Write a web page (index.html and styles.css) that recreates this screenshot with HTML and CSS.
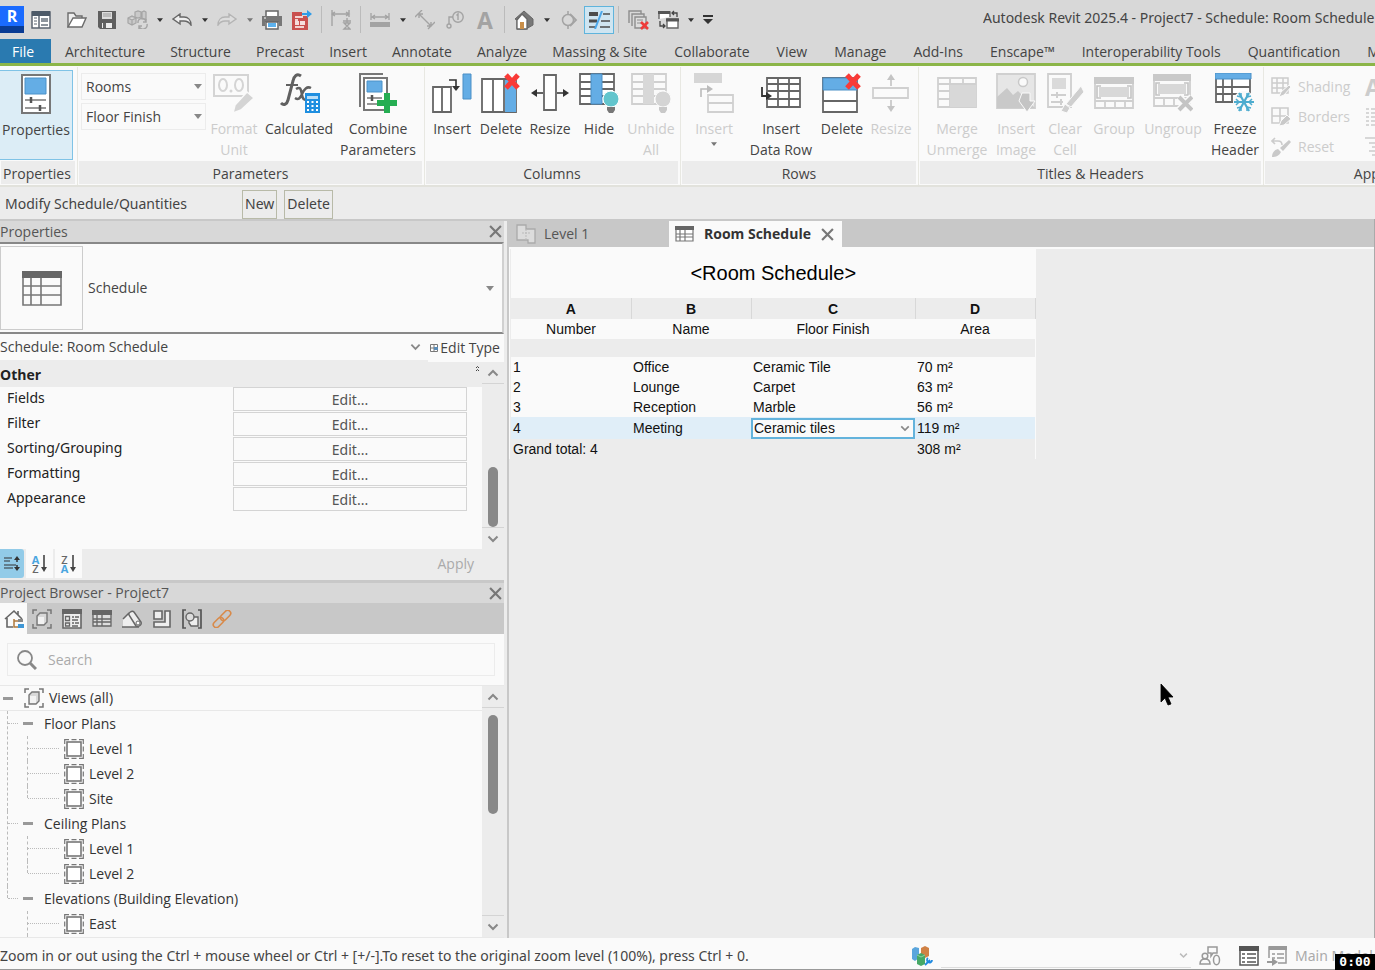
FILE: index.html
```html
<!DOCTYPE html>
<html lang="en">
<head>
    <meta charset="UTF-8">
    <meta name="viewport" content="width=device-width, initial-scale=1.0">
    <title>Autodesk Revit 2025.4 - Project7</title>
    <link rel="stylesheet" href="styles.css">
</head>
<body>
    <!-- shared icons -->
    <svg class="sprite" aria-hidden="true">
        <symbol id="caret" viewBox="0 0 8 5"><path d="M0 0h8L4 5z" fill="currentColor"/></symbol>
        <symbol id="chevron" viewBox="0 0 12 8"><path d="M1.500 1.500L6 6l4.500-4.500" fill="none" stroke="currentColor" stroke-width="2"/></symbol>
        <symbol id="close" viewBox="0 0 12 12"><path d="M1 1l10 10M11 1L1 11" stroke="currentColor" stroke-width="2"/></symbol>
        <symbol id="redx" viewBox="0 0 18 18"><path d="M3 2l12 13M15 2L3 15" stroke="#f93a37" stroke-width="5"/></symbol>
        <symbol id="cube" viewBox="0 0 20 20"><path d="M1 5V1h4M15 1h4v4M1 15v4h4M15 19h4v-4" fill="none" stroke="#777" stroke-width="1.500"/><path d="M5 7l3-3h7v9l-3 3H5z" fill="#d8d8d8" stroke="#777" stroke-width="1.400"/><path d="M6 8h6v7H6z" fill="#f2f2f2"/></symbol>
        <symbol id="plan" viewBox="0 0 20 20"><path d="M.7 5V.7H5M7.500.7H12.500M15 .7h4.300V5M19.300 7.500v5M19.300 15v4.300H15M12.500 19.300h-5M5 19.300H.7V15M.7 12.500v-5" fill="none" stroke="#777" stroke-width="1.200"/><rect x="3" y="3" width="14" height="14" fill="#fff" stroke="#777" stroke-width="1.600"/></symbol>
        <symbol id="grid" viewBox="0 0 40 35"><path d="M1 1h38v33H1zM1 15h38M1 24h38M9 5v29M19 5v29" fill="none" stroke="#777" stroke-width="1.600"/><path d="M0 0h40v7H0z" fill="#666"/></symbol>
    </svg>

    <header class="titlebar">
        <button class="logo" aria-label="Revit">R</button>
        <button class="qa" aria-label="Home view"><svg width="20" height="20" viewBox="0 0 20 20"><path d="M1 2h18v16H1z" fill="#fff" stroke="#5b6470" stroke-width="1.500"/><path d="M1 1h18v5H1z" fill="#4d5a68"/><path d="M3 8h3M3 11h3M3 14h3" stroke="#5b6470"/><path d="M8 6v12" stroke="#5b6470" stroke-width="1.500"/><path d="M10 8h7v4h-7zM10 14h7v2h-7z" fill="#8d959d"/></svg></button>
        <span class="qa-space"></span>
        <button class="qa" aria-label="Open"><svg width="20" height="18" viewBox="0 0 20 18"><path d="M1 16V2h6l2 3h6v3" fill="#eee" stroke="#6b6b6b" stroke-width="1.400"/><path d="M1 16L6 7h13l-4 9z" fill="#fff" stroke="#6b6b6b" stroke-width="1.400"/></svg></button>
        <button class="qa" aria-label="Save"><svg width="18" height="18" viewBox="0 0 18 18"><path d="M0 0h18v18H2l-2-2z" fill="#5f5f5f"/><path d="M4 1h10v7H4z" fill="#ddd"/><path d="M5 3h8M5 5h8" stroke="#999"/><path d="M4 12h10v5H4z" fill="#eee"/><path d="M5 12h3v5H5z" fill="#666"/></svg></button>
        <button class="qa" aria-label="Synchronize"><svg width="21" height="19" viewBox="0 0 21 19"><g fill="#c9c9c9" stroke="#a5a5a5" stroke-width="1.200"><path d="M8 2l3-1 3 1v5l-3 1-3-1zM15 2l2-1 2 1v7h-4zM1 8l4-2 4 2v5l-4 2-4-2zM1 8l4 2 4-2M5 10v5"/></g><path d="M11 13a4 4 0 0 1 8-1M20 14a4 4 0 0 1-8 2M19 9v3h-3M12 19v-3h3" fill="none" stroke="#a5a5a5" stroke-width="1.500"/></svg></button>
        <button class="drop" aria-label="Synchronize options"><svg width="6" height="4"><use href="#caret"/></svg></button>
        <button class="qa" aria-label="Undo"><svg width="20" height="13" viewBox="0 0 20 13"><path d="M1 6l7-5v3h4c4 0 7 3 7 8-2-3-4-4-7-4H8v3z" fill="#eee" stroke="#666" stroke-width="1.400"/></svg></button>
        <button class="drop" aria-label="Undo list"><svg width="6" height="4"><use href="#caret"/></svg></button>
        <button class="qa" aria-label="Redo"><svg width="20" height="13" viewBox="0 0 20 13"><path d="M19 6l-7-5v3H8c-4 0-7 3-7 8 2-3 4-4 7-4h4v3z" fill="#ddd" stroke="#b4b4b4" stroke-width="1.400"/></svg></button>
        <button class="drop dim" aria-label="Redo list"><svg width="6" height="4"><use href="#caret"/></svg></button>
        <button class="qa" aria-label="Print"><svg width="20" height="20" viewBox="0 0 20 20"><path d="M4 7V1h12v6" fill="#fff" stroke="#666" stroke-width="1.500"/><path d="M0 6h20v10h-3v-4H3v4H0z" fill="#777"/><path d="M2 8h2" stroke="#fff"/><path d="M4 12h12v7H4z" fill="#fff" stroke="#666" stroke-width="1.500"/><path d="M6 13h8v4H6z" fill="#5db2ee"/></svg></button>
        <button class="qa" aria-label="Export to PDF"><svg width="20" height="20" viewBox="0 0 20 20"><path d="M0 2h10v4h6v14H0z" fill="#c9504f"/><path d="M3 7h8M3 10h3M3 17h9" stroke="#fff" stroke-width="1.300"/><path d="M3 11h4v4H3zM8 11h5v4H8z" fill="#f6dede"/><path d="M10 3h5V0l5 4-5 4V5h-5z" fill="#2f9be8"/></svg></button>
        <span class="qa-sep"></span>
        <button class="qa" aria-label="Align"><svg width="20" height="20" viewBox="0 0 20 20"><path d="M1 0v16M1 4h17M18 0v7M4 2L1 4l3 2M15 2l3 2-3 2M12 11h8M16 8v5M13 13h6l-3 3zM13 19h6l-3-3z" fill="none" stroke="#a3a3a3" stroke-width="1.400"/></svg></button>
        <span class="qa-sep"></span>
        <button class="qa" aria-label="Measure"><svg width="20" height="14" viewBox="0 0 20 14"><path d="M1 0v7M19 0v7M2 4h16M5 2L2 4l3 2M15 2l3 2-3 2" fill="none" stroke="#a3a3a3" stroke-width="1.300"/><path d="M0 9h20v5H0z" fill="#a3a3a3"/></svg></button>
        <button class="drop" aria-label="Measure options"><svg width="6" height="4"><use href="#caret"/></svg></button>
        <button class="qa" aria-label="Aligned dimension"><svg width="20" height="20" viewBox="0 0 20 20"><path d="M0 7l7-7M13 19l7-7M4 4l12 12M4 8V4h4M16 12v4h-4" fill="none" stroke="#a3a3a3" stroke-width="1.400"/></svg></button>
        <button class="qa" aria-label="Tag"><svg width="18" height="18" viewBox="0 0 18 18"><circle cx="12" cy="6" r="5.200" fill="none" stroke="#a3a3a3" stroke-width="1.400"/><path d="M10.500 4.500L12 3v6M7 6H3v7" fill="none" stroke="#a3a3a3" stroke-width="1.400"/><circle cx="3" cy="15" r="2" fill="none" stroke="#a3a3a3" stroke-width="1.400"/></svg></button>
        <button class="qa letter" aria-label="Text">A</button>
        <span class="qa-sep"></span>
        <button class="qa" aria-label="Default 3D view"><svg width="20" height="20" viewBox="0 0 20 20"><path d="M1 9l9-8 9 8v6l-7 4H3v-9z" fill="#777" stroke="#666"/><path d="M3 10l5-6 5 5v10H3z" fill="#fff" stroke="#666" stroke-width="1.300"/><path d="M6 12h4v7H6z" fill="#c98f4a"/></svg></button>
        <button class="drop" aria-label="3D view options"><svg width="6" height="4"><use href="#caret"/></svg></button>
        <button class="qa" aria-label="Section"><svg width="18" height="18" viewBox="0 0 18 18"><circle cx="8" cy="9" r="5.500" fill="none" stroke="#a3a3a3" stroke-width="1.500"/><path d="M8 0v3M8 15v3" stroke="#a3a3a3" stroke-width="1.500"/><path d="M10 3l6 6-6 6" fill="none" stroke="#a3a3a3" stroke-width="1.800"/></svg></button>
        <button class="qa on" aria-label="Thin lines"><svg width="21" height="18" viewBox="0 0 21 18"><path d="M0 3h9" stroke="#4c4c4c" stroke-width="4"/><path d="M0 10h8" stroke="#4c4c4c" stroke-width="3"/><path d="M0 16h7M14 3h7M12 10h9M11 16h10" stroke="#4c4c4c" stroke-width="1.500"/><path d="M13 0L6 18" stroke="#4da8ea" stroke-width="2"/></svg></button>
        <span class="qa-sep"></span>
        <button class="qa" aria-label="Close inactive views"><svg width="21" height="20" viewBox="0 0 21 20"><path d="M1 13V1h12v3M4 16V4h12v3" fill="none" stroke="#8d8d8d" stroke-width="1.400"/><path d="M7 7h11v11H7z" fill="#ddd" stroke="#8d8d8d" stroke-width="1.400"/><path d="M9 10h6M9 13h4" stroke="#8d8d8d"/><path d="M13 12l7 7M20 12l-7 7" stroke="#ee3c3a" stroke-width="2.600"/></svg></button>
        <button class="qa" aria-label="Switch windows"><svg width="21" height="19" viewBox="0 0 21 19"><path d="M1 9V2h11v5" fill="#fff" stroke="#666" stroke-width="1.400"/><path d="M0 1h12v3H0z" fill="#555"/><path d="M9 9h11v9H9z" fill="#fff" stroke="#666" stroke-width="1.400"/><path d="M8 10h13" stroke="#555" stroke-width="3"/><path d="M14 3h5v4M16 1l-2 2 2 2M2 11v5h5M5 14l2 2-2 2" fill="none" stroke="#444" stroke-width="1.300"/></svg></button>
        <button class="drop" aria-label="Window list"><svg width="6" height="4"><use href="#caret"/></svg></button>
        <button class="custom" aria-label="Customize toolbar"><svg width="10" height="9" viewBox="0 0 10 9"><path d="M0 0h10v2H0zM0 4h10L5 9z" fill="#333"/></svg></button>
        <h1 class="app-title">Autodesk Revit 2025.4 - Project7 - Schedule: Room Schedule</h1>
    </header>

    <nav class="tabs">
        <a class="file" href="#">File</a>
        <a href="#">Architecture</a>
        <a href="#">Structure</a>
        <a href="#">Precast</a>
        <a href="#">Insert</a>
        <a href="#">Annotate</a>
        <a href="#">Analyze</a>
        <a href="#">Massing &amp; Site</a>
        <a href="#">Collaborate</a>
        <a href="#">View</a>
        <a href="#">Manage</a>
        <a href="#">Add-Ins</a>
        <a href="#">Enscape™</a>
        <a href="#">Interoperability Tools</a>
        <a href="#">Quantification</a>
        <a href="#">Modify</a>
    </nav>

    <section class="ribbon">
        <div class="panel p-properties">
            <div class="tools">
                <button class="tool active"><svg width="30" height="40" viewBox="0 0 30 40"><path d="M1 1h28v38H1z" fill="#fff" stroke="#777" stroke-width="2"/><path d="M4 4h21v16H4z" fill="#64ade5" stroke="#4b91c8"/><path d="M4 26h21M4 34h21" stroke="#777" stroke-width="1.500"/><path d="M10 23v6M19 31v6" stroke="#555" stroke-width="2.500"/></svg><span>Properties</span></button>
            </div>
            <h2>Properties</h2>
        </div>
        <div class="panel p-parameters">
            <div class="tools">
                <div class="selects">
                    <label class="combo"><select aria-label="Category"><option>Rooms</option></select><svg width="10" height="5"><use href="#caret"/></svg></label>
                    <label class="combo"><select aria-label="Parameter"><option>Floor Finish</option></select><svg width="10" height="5"><use href="#caret"/></svg></label>
                </div>
                <button class="tool w-56" disabled><svg width="42" height="40" viewBox="0 0 42 40"><rect x="1" y="2" width="34" height="21" fill="none" stroke="#d4d4d4" stroke-width="2"/><g fill="none" stroke="#d4d4d4" stroke-width="2"><ellipse cx="10" cy="12" rx="4" ry="6"/><ellipse cx="26" cy="12" rx="4" ry="6"/></g><circle cx="18" cy="18" r="1.500" fill="#d4d4d4"/><path d="M20 40l2-8 12-13 7 6-13 12z" fill="#d4d4d4" stroke="#fafafa" stroke-width="1.500"/></svg><span>Format</span><span>Unit</span></button>
                <button class="tool w-74"><svg width="42" height="40" viewBox="0 0 42 40"><g fill="none" stroke="#606060"><path d="M23 3c-4-3-7 0-8 5L10 27c-1 4-4 6-7 3" stroke-width="3"/><path d="M8 12h12" stroke-width="2"/><path d="M18 16c5-3 5 1 6 6s3 6 6 3M33 15c-4-2-7 1-9 6s-4 6-7 4" stroke-width="2.500"/></g><path d="M27 20h15v20H27z" fill="#1f8fe0"/><path d="M29 23h11v3H29z" fill="#b9def8"/><path d="M29 29h11M29 33h11M29 37h11" stroke="#fff" stroke-width="2" stroke-dasharray="2 2.500"/></svg><span>Calculated</span></button>
                <button class="tool w-84"><svg width="38" height="40" viewBox="0 0 38 40"><path d="M1 34V1h23" fill="none" stroke="#777" stroke-width="2"/><path d="M5 5h23v32H5z" fill="#fff" stroke="#777" stroke-width="2"/><path d="M8 8h15v11H8z" fill="#64ade5" stroke="#4b91c8"/><path d="M8 25h15M8 31h10" stroke="#777" stroke-width="1.500"/><path d="M13 22v6" stroke="#555" stroke-width="2.500"/><path d="M25 20h6v7h7v6h-7v7h-6v-7h-7v-6h7z" fill="#25ad52"/></svg><span>Combine</span><span>Parameters</span></button>
            </div>
            <h2>Parameters</h2>
        </div>
        <div class="panel p-columns">
            <div class="tools">
                <button class="tool w-48"><svg width="40" height="40" viewBox="0 0 40 40"><path d="M1 14h18v25H1zM10 14v25" fill="#fff" stroke="#666" stroke-width="1.800"/><path d="M17 7h7v8" fill="none" stroke="#333" stroke-width="1.600"/><path d="M20 13h8l-4 5z" fill="#333"/><path d="M31 1h8v25h-8z" fill="#64ade5" stroke="#4b8fc6"/></svg><span>Insert</span></button>
                <button class="tool w-50"><svg width="40" height="40" viewBox="0 0 40 40"><path d="M1 6h34v33H1zM12 6v33M23 6v33" fill="#fff" stroke="#666" stroke-width="1.800"/><path d="M24 7h11v32H24z" fill="#64ade5"/><use href="#redx" x="22" width="18" height="18"/></svg><span>Delete</span></button>
                <button class="tool w-48"><svg width="38" height="40" viewBox="0 0 38 40"><path d="M13 2h12v35H13z" fill="#fff" stroke="#666" stroke-width="1.800"/><path d="M4 20h8M26 20h8" stroke="#333" stroke-width="1.600"/><path d="M0 20l6-4v8zM38 20l-6-4v8z" fill="#333"/></svg><span>Resize</span></button>
                <button class="tool w-50"><svg width="40" height="40" viewBox="0 0 40 40"><path d="M1 1h34v30H1zM1 9h34M1 16h34M1 23h34" fill="#fff" stroke="#666" stroke-width="1.800"/><path d="M12 1h11v30H12z" fill="#64ade5" stroke="#4b8fc6"/><circle cx="32" cy="26" r="8" fill="#62c5cd" stroke="#fff"/><path d="M28 34h8v3l-2 3h-4l-2-3z" fill="#777"/></svg><span>Hide</span></button>
                <button class="tool w-54" disabled><svg width="40" height="40" viewBox="0 0 40 40"><path d="M1 1h34v30H1zM1 9h34M1 16h34M1 23h34" fill="#fafafa" stroke="#d0d0d0" stroke-width="1.800"/><path d="M12 1h11v30H12z" fill="#d8d8d8"/><circle cx="32" cy="26" r="8" fill="#d4d4d4" stroke="#fafafa"/><path d="M28 34h8v3l-2 3h-4l-2-3z" fill="#c8c8c8"/></svg><span>Unhide</span><span>All</span></button>
            </div>
            <h2>Columns</h2>
        </div>
        <div class="panel p-rows">
            <div class="tools">
                <button class="tool w-60" disabled><svg width="40" height="40" viewBox="0 0 40 40"><path d="M0 0h28v10H0z" fill="#d6d6d6"/><path d="M7 24v-8h8" fill="none" stroke="#bbb" stroke-width="1.600"/><path d="M13 12l6 4-6 4z" fill="#bbb"/><path d="M14 22h25v17H14zM14 30h25" fill="none" stroke="#d0d0d0" stroke-width="1.800"/></svg><span>Insert</span><svg class="more" width="6" height="4"><use href="#caret"/></svg></button>
                <button class="tool w-74"><svg width="40" height="40" viewBox="0 0 40 40"><path d="M6 5h33v29H6zM6 11h33M6 18h33M6 26h33M17 5v29M28 5v29" fill="#fff" stroke="#666" stroke-width="1.800"/><path d="M1 14v9h5" fill="none" stroke="#333" stroke-width="1.800"/><path d="M5 19l6 4-6 4z" fill="#333"/></svg><span>Insert</span><span>Data Row</span></button>
                <button class="tool w-48"><svg width="40" height="40" viewBox="0 0 40 40"><path d="M1 5h34v34H1zM1 28h34" fill="#fff" stroke="#666" stroke-width="1.800"/><path d="M1 5h34v12H1z" fill="#64ade5" stroke="#4b8fc6"/><use href="#redx" x="22" width="18" height="18"/></svg><span>Delete</span></button>
                <button class="tool w-50" disabled><svg width="38" height="40" viewBox="0 0 38 40"><path d="M1 15h35v10H1z" fill="none" stroke="#d0d0d0" stroke-width="1.800"/><path d="M19 5v8M19 27v8" stroke="#c4c4c4" stroke-width="1.600"/><path d="M19 1l4 6h-8zM19 39l4-6h-8z" fill="#c4c4c4"/></svg><span>Resize</span></button>
            </div>
            <h2>Rows</h2>
        </div>
        <div class="panel p-titles">
            <div class="tools">
                <button class="tool w-70" disabled><svg width="40" height="40" viewBox="0 0 40 40"><path d="M1 5h38v29H1zM1 11h38M1 18h12M1 26h12M13 5v29M26 5v6" fill="none" stroke="#d0d0d0" stroke-width="1.800"/><path d="M13 12h26v22H13z" fill="#d8d8d8"/></svg><span>Merge</span><span>Unmerge</span></button>
                <button class="tool w-48" disabled><svg width="40" height="40" viewBox="0 0 40 40"><path d="M1 1h38v34H1z" fill="#e6e6e6" stroke="#d0d0d0" stroke-width="1.800"/><path d="M1 35V24l10-9 6 7 5-4 17 17z" fill="#c9c9c9"/><circle cx="27" cy="9" r="4.500" fill="#fafafa" stroke="#c9c9c9" stroke-width="1.500"/><path d="M26 20h8v8h5l-8 11-8-11z" fill="#c4c4c4" stroke="#fafafa"/></svg><span>Insert</span><span>Image</span></button>
                <button class="tool w-50" disabled><svg width="38" height="40" viewBox="0 0 38 40"><path d="M2 1h23v33H2z" fill="none" stroke="#cfcfcf" stroke-width="1.800"/><path d="M6 5h14v11H6z" fill="#dadada"/><path d="M5 22h15M5 29h12M11 19v6M15 26v6" stroke="#cfcfcf" stroke-width="2"/><path d="M20 31L35 13l3 6-13 15zM15 38l4-7 5 4-3 5z" fill="#cfcfcf" stroke="#fafafa"/></svg><span>Clear</span><span>Cell</span></button>
                <button class="tool w-48" disabled><svg width="40" height="40" viewBox="0 0 40 40"><path d="M1 5h38v30H1zM1 28h38M11 28v7M21 28v7M31 28v7" fill="none" stroke="#cfcfcf" stroke-width="1.800"/><path d="M0 4h40v7H0z" fill="#c9c9c9"/><path d="M5 14h30v10H5z" fill="#d8d8d8"/><path d="M7 13H3v12h4M33 13h4v12h-4" fill="none" stroke="#c4c4c4" stroke-width="1.600"/></svg><span>Group</span></button>
                <button class="tool w-70" disabled><svg width="40" height="40" viewBox="0 0 40 40"><path d="M1 2h36v31H1zM1 25h36M11 25v8M21 25v8" fill="none" stroke="#cfcfcf" stroke-width="1.800"/><path d="M0 1h38v7H0z" fill="#c9c9c9"/><path d="M5 11h28v10H5z" fill="#d8d8d8"/><path d="M7 10H3v12h4M31 10h4v12h-4" fill="none" stroke="#c4c4c4" stroke-width="1.600"/><path d="M26 24l13 13M39 24L26 37" stroke="#fafafa" stroke-width="7"/><path d="M26 24l13 13M39 24L26 37" stroke="#c4c4c4" stroke-width="4"/></svg><span>Ungroup</span></button>
                <button class="tool w-54"><svg width="40" height="40" viewBox="0 0 40 40"><path d="M1 1h34v28H1zM1 14h34M1 21h34M8 6v23M17 6v23" fill="#fff" stroke="#666" stroke-width="1.800"/><path d="M0 0h36v6H0z" fill="#64ade5" stroke="#4b8fc6"/><circle cx="29" cy="29" r="11" fill="#fafafa"/><g stroke="#4eaccf" stroke-width="2.200" fill="none"><path d="M19 29h20M24 20l10 18M34 20L24 38"/><path d="M21 26l3 3-3 3M37 26l-3 3 3 3M22 23l4 1v-4M32 20v4l4-1M22 35l4-1v4M32 38v-4l4 1" stroke-width="1.500"/></g></svg><span>Freeze</span><span>Header</span></button>
            </div>
            <h2>Titles &amp; Headers</h2>
        </div>
        <div class="panel p-appearance">
            <div class="tools">
                <div class="small-tools">
                    <button disabled><svg width="20" height="20" viewBox="0 0 20 20"><path d="M1 1h16v15H1zM1 6h16M1 11h16M6 1v15M12 1v15" fill="none" stroke="#ccc" stroke-width="1.500"/><path d="M8 20l2-5 8-7 2 2-7 8z" fill="#c9c9c9" stroke="#fafafa"/></svg>Shading</button>
                    <button disabled><svg width="20" height="20" viewBox="0 0 20 20"><path d="M1 1h16v15H1zM1 9h16M9 1v15" fill="none" stroke="#ccc" stroke-width="1.600"/><path d="M8 19l2-5 6-6 4 4-7 6z" fill="#c9c9c9" stroke="#fafafa"/></svg>Borders</button>
                    <button disabled><svg width="20" height="20" viewBox="0 0 20 20"><path d="M1 4h6c3 0 4 2 4 4M4 1L1 4l3 3" fill="none" stroke="#ccc" stroke-width="1.600"/><path d="M1 20c0-4 2-7 6-8l3 3c-2 4-5 5-9 5zM9 11l9-8 2 2-8 9z" fill="#c9c9c9"/></svg>Reset</button>
                </div>
                <div class="small-tools">
                    <button class="letter" disabled aria-label="Font">A</button>
                    <button disabled aria-label="Align horizontal"><svg width="20" height="20" viewBox="0 0 20 20"><path d="M1 2h3M6 2h14M1 6h3M6 6h14M1 10h3M6 10h14M1 14h3M6 14h14M1 18h3M6 18h14" stroke="#ccc" stroke-width="1.500"/></svg></button>
                    <button disabled aria-label="Align vertical"><svg width="20" height="20" viewBox="0 0 20 20"><path d="M0 1h20M4 6h16M7 10h13M4 14h16M7 18h13" stroke="#ccc" stroke-width="1.500"/></svg></button>
                </div>
            </div>
            <h2>Appearance</h2>
        </div>
    </section>

    <div class="options">
        <span class="options-label">Modify Schedule/Quantities</span>
        <button>New</button>
        <button>Delete</button>
    </div>

    <main class="workspace">
        <aside class="docks">
            <section class="properties">
                <div class="dock-head"><h2>Properties</h2><button aria-label="Close properties"><svg width="13" height="13"><use href="#close"/></svg></button></div>
                <button class="type-selector">
                    <span class="thumb"><svg width="40" height="35"><use href="#grid"/></svg></span>
                    <span class="type-name">Schedule</span>
                    <svg width="10" height="5"><use href="#caret"/></svg>
                </button>
                <div class="instance">
                    <label class="combo"><select aria-label="Instance"><option>Schedule: Room Schedule</option></select><svg width="11" height="8"><use href="#chevron"/></svg></label>
                    <button><svg width="8" height="8" viewBox="0 0 8 8"><path d="M.5.5h7v7h-7zM.5 4h7M4 .5v7" fill="#fff" stroke="#777"/><path d="M4 3h4v3H4z" fill="#5b8db8"/></svg>Edit Type</button>
                </div>
                <div class="prop-scroll">
                    <div class="prop-list">
                        <div class="group-head"><h3>Other</h3><svg width="5" height="12" viewBox="0 0 5 12"><path d="M1 6l1.500-1.500L4 6M1 9l1.500-1.500L4 9" fill="none" stroke="#444"/></svg></div>
                        <div class="prop"><span>Fields</span><button>Edit...</button></div>
                        <div class="prop"><span>Filter</span><button>Edit...</button></div>
                        <div class="prop"><span>Sorting/Grouping</span><button>Edit...</button></div>
                        <div class="prop"><span>Formatting</span><button>Edit...</button></div>
                        <div class="prop"><span>Appearance</span><button>Edit...</button></div>
                    </div>
                    <div class="scrollbar">
                        <button class="up" aria-label="Scroll up"><svg width="12" height="8"><use href="#chevron"/></svg></button>
                        <div class="track end"><div class="handle short"></div></div>
                        <button class="down" aria-label="Scroll down"><svg width="12" height="8"><use href="#chevron"/></svg></button>
                    </div>
                </div>
                <div class="prop-foot">
                    <button class="sort selected" aria-label="Default order"><svg width="17" height="17" viewBox="0 0 17 17"><path d="M0 3h8M0 6h6M0 10h12M0 13h9" stroke="#53656f" stroke-width="1.500"/><path d="M13 3v4M13 10v4" stroke="#333" stroke-width="1.500"/><path d="M10 5l3-4 3 4zM10 12l3 4 3-4z" fill="#333"/></svg></button>
                    <button class="sort" aria-label="Ascending"><span class="az"><b>A</b><i>Z</i></span><svg width="6" height="18" viewBox="0 0 6 18"><path d="M3 0v14" stroke="#444" stroke-width="1.600"/><path d="M0 12h6l-3 5z" fill="#444"/></svg></button>
                    <button class="sort" aria-label="Descending"><span class="az"><i>Z</i><b>A</b></span><svg width="6" height="18" viewBox="0 0 6 18"><path d="M3 0v14" stroke="#444" stroke-width="1.600"/><path d="M0 12h6l-3 5z" fill="#444"/></svg></button>
                    <button class="apply" disabled>Apply</button>
                </div>
            </section>

            <section class="browser">
                <div class="dock-head"><h2>Project Browser - Project7</h2><button aria-label="Close browser"><svg width="13" height="13"><use href="#close"/></svg></button></div>
                <div class="browser-tabs">
                    <button class="current" aria-label="All"><svg width="20" height="20" viewBox="0 0 20 20"><path d="M1 10l9-8 8 8M3 9v9h6M14 2v4" fill="none" stroke="#666" stroke-width="1.600"/><path d="M10 10v8h4M10 12h4" fill="none" stroke="#b07a3c" stroke-width="1.500"/><path d="M14 10h5v3h-5z" fill="#888"/><path d="M14 15h6v4h-6z" fill="#3f97d6"/></svg></button>
                    <button aria-label="Views"><svg width="20" height="20"><use href="#cube"/></svg></button>
                    <button aria-label="Legends"><svg width="20" height="20" viewBox="0 0 20 20"><path d="M1 1h18v18H1z" fill="#eee" stroke="#666" stroke-width="1.600"/><path d="M0 0h20v5H0z" fill="#666"/><path d="M3.500 7.500h4v4h-4zM3.500 14h4v3h-4zM10 8h2M13 8h4M10 11h6M10 14h2M13 14h4M10 17h6" fill="none" stroke="#666" stroke-width="1.300"/></svg></button>
                    <button aria-label="Schedules"><svg width="20" height="17" viewBox="0 0 20 17"><path d="M1 1h18v15H1zM1 9h18M1 12h18M5 4v12M10 4v12" fill="#ddd" stroke="#666" stroke-width="1.300"/><path d="M0 0h20v5H0z" fill="#666"/></svg></button>
                    <button aria-label="Sheets"><svg width="20" height="18" viewBox="0 0 20 18"><path d="M1 9l6-6 9 14H1z" fill="#eee"/><path d="M0 17h17M1 9l6-6" fill="none" stroke="#666" stroke-width="1.500"/><path d="M7 5c-1-2 3-5 5-3l7 10c1 3-2 5-5 4z" fill="#eee" stroke="#666" stroke-width="1.500"/><circle cx="16" cy="13" r="2" fill="#fff" stroke="#666"/></svg></button>
                    <button aria-label="Panels"><svg width="18" height="18" viewBox="0 0 18 18"><path d="M1 1h8v8H1z" fill="#eee" stroke="#666" stroke-width="1.600"/><path d="M12 1h5v16H1v-5h11z" fill="#eee" stroke="#666" stroke-width="1.600"/></svg></button>
                    <button aria-label="Families"><svg width="20" height="20" viewBox="0 0 20 20"><path d="M4 1H1v18h3M16 1h3v18h-3" fill="none" stroke="#555" stroke-width="1.700"/><path d="M7 8h9v9H9l-2-3z" fill="#eee" stroke="#666" stroke-width="1.400"/><circle cx="8" cy="8" r="4" fill="#ddd" stroke="#666" stroke-width="1.400"/></svg></button>
                    <button aria-label="Links"><svg width="20" height="18" viewBox="0 0 20 18"><g fill="none" stroke="#d88a4a" stroke-width="1.600" transform="rotate(-45 10 9)"><rect x="-1" y="6" width="12" height="6" rx="3"/><rect x="9" y="6" width="12" height="6" rx="3"/></g></svg></button>
                </div>
                <div class="search">
                    <label class="search-box"><svg width="20" height="20" viewBox="0 0 20 20"><circle cx="8" cy="8" r="7" fill="none" stroke="#888" stroke-width="1.800"/><path d="M13 13l6 6" stroke="#888" stroke-width="3"/></svg><input type="text" placeholder="Search" aria-label="Search"></label>
                </div>
                <div class="tree-scroll">
                    <div class="tree">
                        <div class="node root"><i class="minus"></i><svg width="20" height="20"><use href="#cube"/></svg><span>Views (all)</span></div>
                        <ul class="groups">
                            <li>
                                <div class="node"><i class="minus"></i><span>Floor Plans</span></div>
                                <ul class="views">
                                    <li class="node"><svg width="20" height="20"><use href="#plan"/></svg><span>Level 1</span></li>
                                    <li class="node"><svg width="20" height="20"><use href="#plan"/></svg><span>Level 2</span></li>
                                    <li class="node"><svg width="20" height="20"><use href="#plan"/></svg><span>Site</span></li>
                                </ul>
                            </li>
                            <li>
                                <div class="node"><i class="minus"></i><span>Ceiling Plans</span></div>
                                <ul class="views">
                                    <li class="node"><svg width="20" height="20"><use href="#plan"/></svg><span>Level 1</span></li>
                                    <li class="node"><svg width="20" height="20"><use href="#plan"/></svg><span>Level 2</span></li>
                                </ul>
                            </li>
                            <li>
                                <div class="node"><i class="minus"></i><span>Elevations (Building Elevation)</span></div>
                                <ul class="views">
                                    <li class="node"><svg width="20" height="20"><use href="#plan"/></svg><span>East</span></li>
                                    <li class="node"><svg width="20" height="20"><use href="#plan"/></svg></li>
                                </ul>
                            </li>
                        </ul>
                    </div>
                    <div class="scrollbar">
                        <button class="up" aria-label="Scroll up"><svg width="12" height="8"><use href="#chevron"/></svg></button>
                        <div class="track"><div class="handle long"></div></div>
                        <button class="down" aria-label="Scroll down"><svg width="12" height="8"><use href="#chevron"/></svg></button>
                    </div>
                </div>
            </section>
        </aside>

        <section class="view">
            <div class="view-tabs">
                <a class="view-tab" href="#"><svg width="20" height="20" viewBox="0 0 20 20"><path d="M1 1h9v4h9v14h-7v-3H1z" fill="#dcdcdc" stroke="#aaa" stroke-width="1.300"/><path d="M10 5v11M6 9h8" stroke="#bbb" stroke-dasharray="2 1"/></svg><span>Level 1</span></a>
                <a class="view-tab current" href="#"><svg width="19" height="16" viewBox="0 0 19 16"><path d="M1 1h17v14H1zM1 8h17M1 11h17M5 4v11M10 4v11" fill="#fff" stroke="#777" stroke-width="1.200"/><path d="M0 0h19v4H0z" fill="#666"/></svg><span>Room Schedule</span><svg class="tab-close" width="13" height="13"><use href="#close"/></svg></a>
            </div>
            <div class="sheet">
                <table class="schedule">
                    <caption>&lt;Room Schedule&gt;</caption>
                    <colgroup><col class="c-std"><col class="c-std"><col class="c-wide"><col class="c-std"></colgroup>
                    <thead>
                        <tr class="letters"><th>A</th><th>B</th><th>C</th><th>D</th></tr>
                        <tr class="names"><th>Number</th><th>Name</th><th>Floor Finish</th><th>Area</th></tr>
                    </thead>
                    <tbody>
                        <tr class="blank"><td colspan="4"></td></tr>
                        <tr><td>1</td><td>Office</td><td>Ceramic Tile</td><td>70 m²</td></tr>
                        <tr><td>2</td><td>Lounge</td><td>Carpet</td><td>63 m²</td></tr>
                        <tr><td>3</td><td>Reception</td><td>Marble</td><td>56 m²</td></tr>
                        <tr class="picked"><td>4</td><td>Meeting</td><td class="edit"><label class="combo"><select aria-label="Floor Finish"><option>Ceramic tiles</option></select><svg width="10" height="7"><use href="#chevron"/></svg></label></td><td>119 m²</td></tr>
                        <tr class="total"><td colspan="3">Grand total: 4</td><td>308 m²</td></tr>
                    </tbody>
                </table>
            </div>
        </section>
    </main>

    <footer class="status">
        <span class="hint">Zoom in or out using the Ctrl + mouse wheel or Ctrl + [+/-].To reset to the original zoom level (100%), press Ctrl + 0.</span>
        <div class="status-tools">
            <button aria-label="Worksets"><svg width="21" height="20" viewBox="0 0 21 20"><path d="M0 3l3-2 4 1v10l-4 3-3-2z" fill="#5aa5dc"/><path d="M9 2l4-2 4 2v8l-4 2-4-2z" fill="#d08144"/><path d="M5 9l4-2 4 2v9l-4 2-4-2z" fill="#46a866"/><path d="M5 9l4 2 4-2" fill="none" stroke="#8fd0a3"/><path d="M13 19l5-5M16 12a2.500 2.500 0 1 0 4 2" stroke="#1f8ae0" stroke-width="1.800" fill="none"/></svg></button>
            <label class="combo workset"><select aria-label="Active workset"><option></option></select><svg width="9" height="7"><use href="#chevron"/></svg></label>
            <button class="requests" aria-label="Editing requests"><svg width="22" height="20" viewBox="0 0 22 20"><g fill="none" stroke="#999" stroke-width="1.500"><circle cx="6" cy="10" r="2.800"/><path d="M1 18c0-3 2-5 5-5s5 2 5 5zM9 1h9v6h-4l-2 3V7H9z"/><ellipse cx="17.500" cy="14" rx="3" ry="4.800"/></g></svg></button>
            <button aria-label="Design options"><svg width="20" height="20" viewBox="0 0 20 20"><path d="M1 1h18v18H1z" fill="#fff" stroke="#555" stroke-width="1.500"/><path d="M0 0h20v5H0z" fill="#555"/><path d="M3 8h3M8 8h9M3 12h3M8 12h9M3 16h3M8 16h9" stroke="#555" stroke-width="1.600"/></svg></button>
            <button aria-label="Add to set"><svg width="20" height="20" viewBox="0 0 20 20"><path d="M2 12V1h17v16h-8" fill="none" stroke="#999" stroke-width="1.500"/><path d="M2 0h18v4H2z" fill="#999"/><path d="M5 8h3M10 8h7M5 12h3M10 12h7" stroke="#999" stroke-width="1.500"/><path d="M0 15h5v-3l6 4-6 4v-3H0z" fill="#999"/></svg></button>
            <span class="option-set">Main Model</span>
        </div>
    </footer>

    <svg class="pointer" width="14" height="24" viewBox="0 0 14 24"><path d="M1 1v18l4-4 3 7 3-1-3-7h5z" fill="#000" stroke="#000" stroke-width=".8"/></svg>
    <div class="timer">0:00</div>
</body>
</html>
```

FILE: styles.css
```css
* {
    box-sizing: border-box;
}
body {
    margin: 0;
    height: 100vh;
    display: flex;
    flex-direction: column;
    overflow: hidden;
    font-family: "Open Sans", "Noto Sans", sans-serif;
    font-size: 14px;
    line-height: 20px;
    color: #444;
    background-color: #ececec;
}
button, select, input {
    font: inherit;
    color: inherit;
    background: none;
    border: 0;
    border-radius: 0;
    margin: 0;
    padding: 0;
}
button {
    display: flex;
    align-items: center;
    justify-content: center;
}
h1, h2, h3, ul {
    margin: 0;
    padding: 0;
    font-size: 14px;
    font-weight: normal;
    list-style: none;
}
a {
    color: inherit;
    text-decoration: none;
}
svg {
    flex: none;
}
.sprite {
    display: none;
}

/* drop-down boxes: native select with our own arrow over it */
.combo {
    position: relative;
    display: block;
    color: #888;
}
.combo select {
    appearance: none;
    width: 100%;
    height: 100%;
    color: #444;
}
.combo svg {
    position: absolute;
    right: 3px;
    top: 0;
    bottom: 0;
    margin: auto 0;
    pointer-events: none;
}

/* slightly wider face for the long lines */
.app-title, .options, .prop, .status {
    font-family: "Noto Sans", "Open Sans", sans-serif;
}

/* title bar */
.titlebar {
    display: flex;
    align-items: center;
    flex: none;
    height: 39px;
    background-color: #d8d8d8;
}
.titlebar button {
    flex: none;
}
.logo {
    width: 24px;
    height: 27px;
    margin-right: 2px;
    background-color: #1a6bff;
    border-bottom: 7px solid #0a3c94;
    color: #fff;
    font-weight: bold;
    font-size: 16px;
}
.qa {
    width: 30px;
    height: 28px;
}
.qa-space {
    width: 6px;
}
.qa.on {
    background-color: #cfe5f1;
    border: 1px solid #5fb4dc;
}
.letter {
    font-size: 23px;
    font-weight: bold;
    color: #a3a3a3;
}
.drop {
    width: 15px;
    height: 28px;
    color: #333;
}
.drop.dim {
    color: #777;
}
.qa-sep {
    flex: none;
    width: 1px;
    height: 27px;
    margin: 0 4px;
    background-color: #bbb;
}
.custom {
    width: 20px;
    height: 28px;
}
.app-title {
    flex: 0 0 392px;
    margin-left: auto;
    padding-bottom: 3px;
    overflow: hidden;
    white-space: nowrap;
}

/* ribbon tabs */
.tabs {
    display: flex;
    flex: none;
    height: 27px;
    gap: 25px;
    overflow: hidden;
    background-color: #d8d8d8;
    border-bottom: 3px solid #8bb548;
    line-height: 26px;
    white-space: nowrap;
}
.tabs a {
    flex: none;
}
.tabs a:nth-child(n+8) {
    padding-right: 2px;
}
.tabs .file {
    width: 51px;
    margin-right: -11px;
    padding-left: 12px;
    background-color: #2a7ab0;
    color: #fff;
}

/* ribbon */
.ribbon {
    display: flex;
    flex: none;
    height: 121px;
    padding-top: 1px;
    overflow: hidden;
    background-color: #fafafa;
    border-bottom: 2px solid #e2e2dc;
}
.panel {
    display: flex;
    flex-direction: column;
    flex: none;
    border-right: 1px solid #e8e8e2;
}
.panel h2 {
    flex: none;
    height: 23px;
    margin: 0 2px 1px 1px;
    background-color: #ececec;
    line-height: 26px;
    text-align: center;
}
.p-properties { width: 78px; }
.p-parameters { width: 347px; }
.p-columns { width: 256px; }
.p-rows { width: 238px; }
.p-titles { width: 345px; }
.p-appearance { width: 260px; }
.p-properties h2 {
    padding-right: 2px;
}
.tools {
    display: flex;
    flex: 1;
    min-height: 0;
    padding: 3px 2px 0 3px;
}
.tool {
    flex: none;
    flex-direction: column;
    justify-content: flex-start;
    height: 90px;
    padding-top: 3px;
    line-height: 21px;
    white-space: nowrap;
}
.tool > svg:first-child {
    margin-bottom: 5px;
}
.tool .more {
    margin-top: 3px;
    color: #777;
}
.tool:disabled, .small-tools button:disabled {
    color: #ccc;
}
.tool.active {
    width: 73px;
    background-color: #dcedf6;
    border: 1px solid #7fc3e6;
    border-left: 0;
}
.p-properties .tools {
    padding-left: 0;
}
.w-48 { width: 48px; }
.w-50 { width: 50px; }
.w-54 { width: 54px; }
.w-56 { width: 56px; }
.w-60 { width: 60px; }
.w-70 { width: 70px; }
.w-74 { width: 74px; }
.w-84 { width: 84px; }
.selects {
    display: flex;
    flex-direction: column;
    gap: 3px;
    width: 125px;
    padding-top: 3px;
}
.selects .combo {
    height: 27px;
    border: 1px solid #ececec;
}
.selects select {
    padding-left: 4px;
}
.selects svg {
    right: 2px;
}
.small-tools {
    width: 94px;
    padding: 2px 0 0 4px;
}
.small-tools button {
    height: 30px;
    gap: 7px;
}

/* options bar */
.options {
    display: flex;
    align-items: center;
    flex: none;
    height: 32px;
    gap: 7px;
    padding: 2px 0 0 5px;
}
.options-label {
    width: 230px;
}
.options button {
    height: 29px;
    padding: 0 2px;
    border: 1px solid #b8baa8;
}

/* workspace */
.workspace {
    display: flex;
    flex: 1;
    min-height: 0;
    background-color: #ececec;
}
.docks {
    display: flex;
    flex-direction: column;
    flex: 0 0 509px;
    padding-right: 3px;
    border-right: 2px solid #c8c8c8;
    border-top: 2px solid #c8c8c8;
}
.properties {
    flex: none;
    border-bottom: 3px solid #c8c8c8;
}
.dock-head {
    display: flex;
    align-items: center;
    justify-content: space-between;
    flex: none;
    height: 21px;
    padding-right: 2px;
    background-color: #d8d8d8;
    color: #555;
}
.dock-head button {
    color: #777;
}
.browser .dock-head {
    height: 20px;
}
.type-selector {
    width: 504px;
    height: 92px;
    padding: 0 7px 0 0;
    background-color: #fafafa;
    border: 2px solid #d0d0d0;
    border-left: 0;
    border-top: 2px solid #888;
    border-bottom: 2px solid #888;
    color: #888;
}
.thumb {
    display: flex;
    align-items: center;
    justify-content: center;
    width: 83px;
    height: 84px;
    border: 1px solid #ccc;
}
.type-name {
    flex: 1;
    padding-left: 5px;
    text-align: left;
    color: #444;
}
.instance {
    display: flex;
    align-items: center;
    width: 504px;
    height: 28px;
    background-color: #fafafa;
}
.instance .combo {
    flex: 1;
    height: 28px;
    border-bottom: 2px solid #ececec;
}
.instance .combo svg {
    right: 7px;
}
.instance button {
    gap: 2px;
    padding: 0 4px 0 2px;
}
.prop-scroll {
    display: flex;
    width: 504px;
    height: 187px;
}
.prop-list {
    flex: 1;
    background-color: #fafafa;
}
.group-head {
    display: flex;
    justify-content: space-between;
    height: 25px;
    padding-right: 2px;
    background-color: #ececec;
    line-height: 26px;
    color: #222;
}
.group-head h3 {
    font-weight: bold;
}
.prop {
    display: flex;
    justify-content: space-between;
    height: 25px;
    padding: 0 15px 0 7px;
    line-height: 22px;
    color: #222;
}
.prop button {
    width: 234px;
    height: 24px;
    padding-top: 2px;
    border: 1px solid #d4d4d4;
    color: #555;
}
.scrollbar {
    display: flex;
    flex-direction: column;
    flex: none;
    width: 22px;
    background-color: #ececec;
    color: #888;
}
.scrollbar button {
    height: 22px;
}
.scrollbar .up {
    border-bottom: 1px solid #d4d4d4;
}
.scrollbar .up svg {
    transform: rotate(180deg);
}
.scrollbar .down {
    border-top: 1px solid #d4d4d4;
}
.track {
    display: flex;
    flex: 1;
    justify-content: center;
    padding-top: 7px;
}
.track.end {
    align-items: flex-end;
}
.handle {
    width: 10px;
    border-radius: 5px;
    background-color: #888;
}
.short {
    height: 60px;
}
.long {
    height: 99px;
}
.prop-foot {
    display: flex;
    gap: 2px;
    height: 31px;
    padding-right: 30px;
}
.sort {
    width: 27px;
    height: 29px;
    gap: 2px;
    background-color: #fafafa;
}
.sort.selected {
    width: 24px;
    background-color: #92cbe8;
    border-radius: 0 3px 3px 0;
}
.az {
    display: flex;
    flex-direction: column;
    font-size: 11px;
    line-height: 9px;
}
.az b {
    color: #4aa5e0;
}
.az i {
    font-style: normal;
    font-weight: 600;
    color: #666;
}
.apply {
    height: 29px;
    margin-left: auto;
    color: #aaa;
}

/* project browser */
.browser {
    display: flex;
    flex-direction: column;
    flex: 1;
    min-height: 0;
}
.browser-tabs {
    display: flex;
    flex: none;
    width: 504px;
    height: 31px;
    background-color: #c8c8c8;
}
.browser-tabs button {
    width: 30px;
}
.browser-tabs .current {
    width: 27px;
    background-color: #fafafa;
}
.search {
    flex: none;
    width: 504px;
    padding: 9px 9px 9px 7px;
    background-color: #fafafa;
}
.search-box {
    display: flex;
    align-items: center;
    gap: 11px;
    height: 33px;
    padding-left: 9px;
    border: 1px solid #ececec;
}
.search-box input {
    flex: 1;
    outline: 0;
}
.search-box input::placeholder {
    color: #aaa;
    opacity: 1;
}
.tree-scroll {
    display: flex;
    flex: 1;
    width: 504px;
    min-height: 0;
    border-top: 1px solid #e8e8e8;
    border-bottom: 1px solid #e8e8e8;
}
.tree {
    flex: 1;
    overflow: hidden;
    background-color: #fafafa;
    color: #333;
}
.node {
    display: flex;
    align-items: center;
    height: 25px;
}
.node.root {
    gap: 5px;
    padding-left: 3px;
    border-bottom: 1px solid #e8e8e8;
}
.root .minus {
    margin-right: 6px;
}
.minus {
    width: 10px;
    height: 3px;
    background-color: #999;
}
.groups > li {
    position: relative;
}
.groups > li > .node {
    gap: 11px;
    padding-left: 23px;
}
.views .node {
    position: relative;
    gap: 5px;
    padding-left: 64px;
}
/* dashed guide lines */
.groups > li::before, .views .node::before {
    content: "";
    position: absolute;
    top: 0;
    left: 7px;
    height: 100%;
    border-left: 1px dashed #bbb;
}
.groups > li::after, .views .node::after {
    content: "";
    position: absolute;
    top: 12px;
    left: 8px;
    width: 10px;
    border-top: 1px dotted #bbb;
}
.views .node::before {
    left: 27px;
}
.views .node::after {
    left: 28px;
    width: 31px;
}
.groups > li:last-child::before, .views .node:last-child::before {
    height: 12px;
}

/* drawing area */
.view {
    flex: 1;
    min-width: 0;
    border-right: 1px solid #aaa;
}
.view-tabs {
    display: flex;
    height: 28px;
    padding: 2px 0 0 7px;
    background-color: #c8c8c8;
}
.view-tab {
    display: flex;
    align-items: center;
    width: 153px;
    gap: 8px;
    color: #555;
}
.view-tab.current {
    width: 173px;
    padding-left: 6px;
    gap: 10px;
    background-color: #fafafa;
    color: #333;
    font-weight: bold;
}
.tab-close {
    color: #777;
}
.sheet {
    padding-left: 1px;
    border-top: 2px solid #fafafa;
    border-left: 1px solid #fafafa;
}
.schedule {
    width: 524px;
    table-layout: fixed;
    border-collapse: collapse;
    font-family: "Liberation Sans", Arial, sans-serif;
    font-size: 14px;
    line-height: 16px;
    color: #111;
    background-color: #fafafa;
}
.schedule caption {
    height: 49px;
    background-color: #fafafa;
    font-size: 20px;
    line-height: 48px;
    color: #000;
}
.c-std {
    width: 120px;
}
.c-wide {
    width: 164px;
}
.schedule th, .schedule td {
    height: 20px;
    padding: 0 2px;
    text-align: left;
    font-weight: normal;
}
.schedule th {
    text-align: center;
}
.schedule .letters th {
    height: 21px;
    background-color: #ececec;
    border-right: 1px solid #d8d8d8;
    font-weight: bold;
}
.schedule .blank td {
    height: 18px;
    background-color: #ececec;
}
.schedule .picked td {
    height: 22px;
    background-color: #e0eef8;
}
.schedule .picked .edit {
    padding: 0;
}
.edit .combo {
    height: 21px;
    background-color: #fafafa;
    border: 2px solid #63b3dc;
}
.edit select {
    display: block;
    padding-left: 1px;
    color: #111;
}
.schedule .total td {
    background-color: #ececec;
}

/* status bar */
.status {
    display: flex;
    align-items: center;
    justify-content: space-between;
    flex: none;
    height: 32px;
    padding-top: 5px;
    overflow: hidden;
    background-color: #fafafa;
    border-bottom: 1px solid #999;
    white-space: nowrap;
}
.status-tools {
    display: flex;
    align-items: center;
    flex: 0 0 463px;
    gap: 8px;
}
.workset {
    flex: 0 0 250px;
    height: 24px;
    border-bottom: 1px solid #ddd;
    color: #bbb;
}
.requests {
    justify-content: flex-start;
    width: 32px;
}
.option-set {
    color: #aaa;
}
.pointer {
    position: absolute;
    left: 1160px;
    top: 683px;
}
.timer {
    position: absolute;
    right: 0;
    bottom: 0;
    width: 40px;
    height: 16px;
    background-color: #000;
    color: #fff;
    font: bold 13px/16px "DejaVu Sans Mono", monospace;
    text-align: center;
}
```
